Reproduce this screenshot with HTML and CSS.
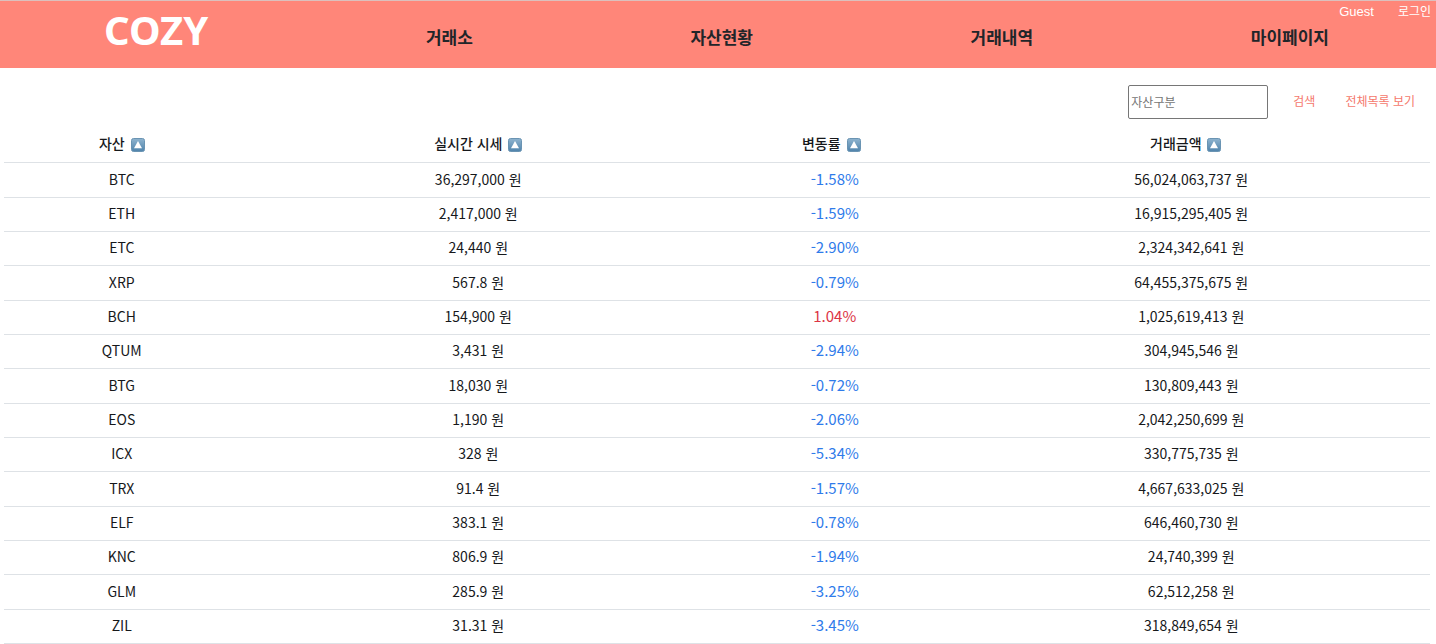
FILE: index.html
```html
<!DOCTYPE html>
<html lang="ko">
<head>
<meta charset="utf-8">
<meta name="viewport" content="width=device-width, initial-scale=1">
<title>COZY</title>
<link rel="stylesheet" href="styles.css">
</head>
<body>
<svg class="defs" aria-hidden="true">
  <defs>
    <linearGradient id="key" x1="0" y1="0" x2="0" y2="1">
      <stop offset="0" stop-color="#8fb4cf"/>
      <stop offset="1" stop-color="#4f83ab"/>
    </linearGradient>
    <symbol id="up" viewBox="0 0 14 14">
      <rect x="0.5" y="0.5" width="13" height="13" rx="2" fill="url(#key)" stroke="#6a94b3"/>
      <path d="M7 3 L11 10.2 H3 Z" fill="#fff"/>
    </symbol>
  </defs>
</svg>
<header class="header">
  <nav class="menu">
    <a class="logo" href="#">COZY</a>
    <a class="menu-link" href="#">거래소</a>
    <a class="menu-link" href="#">자산현황</a>
    <a class="menu-link" href="#">거래내역</a>
    <a class="menu-link" href="#">마이페이지</a>
  </nav>
  <div class="account"><span>Guest</span><a href="#">로그인</a></div>
</header>
<main class="main">
  <form class="search">
    <input class="search-input" type="text" placeholder="자산구분" aria-label="자산구분">
    <button class="text-button" type="button">검색</button>
    <button class="text-button" type="button">전체목록 보기</button>
  </form>
  <table class="prices">
    <thead>
      <tr>
        <th>자산 <button class="sort" type="button" aria-label="자산 정렬"><svg><use href="#up"/></svg></button></th>
        <th>실시간 시세 <button class="sort" type="button" aria-label="실시간 시세 정렬"><svg><use href="#up"/></svg></button></th>
        <th>변동률 <button class="sort" type="button" aria-label="변동률 정렬"><svg><use href="#up"/></svg></button></th>
        <th>거래금액 <button class="sort" type="button" aria-label="거래금액 정렬"><svg><use href="#up"/></svg></button></th>
      </tr>
    </thead>
    <tbody>
      <tr><td>BTC</td><td>36,297,000 원</td><td class="change down">-1.58%</td><td>56,024,063,737 원</td></tr>
      <tr><td>ETH</td><td>2,417,000 원</td><td class="change down">-1.59%</td><td>16,915,295,405 원</td></tr>
      <tr><td>ETC</td><td>24,440 원</td><td class="change down">-2.90%</td><td>2,324,342,641 원</td></tr>
      <tr><td>XRP</td><td>567.8 원</td><td class="change down">-0.79%</td><td>64,455,375,675 원</td></tr>
      <tr><td>BCH</td><td>154,900 원</td><td class="change rise">1.04%</td><td>1,025,619,413 원</td></tr>
      <tr><td>QTUM</td><td>3,431 원</td><td class="change down">-2.94%</td><td>304,945,546 원</td></tr>
      <tr><td>BTG</td><td>18,030 원</td><td class="change down">-0.72%</td><td>130,809,443 원</td></tr>
      <tr><td>EOS</td><td>1,190 원</td><td class="change down">-2.06%</td><td>2,042,250,699 원</td></tr>
      <tr><td>ICX</td><td>328 원</td><td class="change down">-5.34%</td><td>330,775,735 원</td></tr>
      <tr><td>TRX</td><td>91.4 원</td><td class="change down">-1.57%</td><td>4,667,633,025 원</td></tr>
      <tr><td>ELF</td><td>383.1 원</td><td class="change down">-0.78%</td><td>646,460,730 원</td></tr>
      <tr><td>KNC</td><td>806.9 원</td><td class="change down">-1.94%</td><td>24,740,399 원</td></tr>
      <tr><td>GLM</td><td>285.9 원</td><td class="change down">-3.25%</td><td>62,512,258 원</td></tr>
      <tr><td>ZIL</td><td>31.31 원</td><td class="change down">-3.45%</td><td>318,849,654 원</td></tr>
    </tbody>
  </table>
</main>
</body>
</html>
```
FILE: styles.css
```css
* { box-sizing: border-box; }

body {
  margin: 0;
  background: #fff;
  color: #212529;
  font-family: "Noto Sans CJK KR", sans-serif;
  font-size: 14px;
}

a { color: inherit; text-decoration: none; }

button {
  padding: 0;
  border: 0;
  background: none;
  font: inherit;
  color: inherit;
}

.defs { position: absolute; width: 0; height: 0; }

.header {
  position: relative;
  background: #ff8679;
  border-top: 1px solid #dcc0bd;
}

.menu {
  display: flex;
  justify-content: space-between;
  padding: 0 107px 7px 104px;
}

.logo {
  color: #fff;
  font: bold 40px/58px "Noto Sans", sans-serif;
}

.menu-link {
  padding-top: 12px;
  font-size: 17px;
  font-weight: bold;
  line-height: 48px;
}

.account {
  position: absolute;
  top: 0;
  right: 5px;
  display: flex;
  gap: 24px;
  color: #fff;
  font: 13px/22px "Liberation Sans", "Noto Sans CJK KR", sans-serif;
}

.account a { font-size: 12px; }

.main { padding: 17px 6px 0 4px; }

.search {
  display: flex;
  justify-content: flex-end;
  padding-right: 15px;
  margin-bottom: 8px;
}

.search-input {
  width: 140px;
  height: 34px;
  margin-right: 25px;
  padding: 0 2px 2px;
  border: 1px solid #767676;
  border-radius: 2px;
  font: 12px "Noto Sans CJK KR", sans-serif;
}

.search-input::placeholder { color: #757575; }

.text-button {
  color: #f5786c;
  font-size: 12px;
  line-height: 32px;
  align-self: flex-start;
}

.text-button + .text-button { margin-left: 30px; }

.prices {
  width: 100%;
  table-layout: fixed;
  border-collapse: separate;
  border-spacing: 0;
  text-align: center;
}

.prices th,
.prices td {
  height: 34px;
  padding: 0 121px 3px 0;
  border-bottom: 1px solid #dee2e6;
  color: #16181b;
  line-height: 28px;
  white-space: nowrap;
}

.prices tbody tr:nth-child(3n + 1) td { height: 35px; }

.prices th { height: 36px; font-weight: 500; }
.prices th:nth-child(3) { padding-right: 128px; }
.prices th:nth-child(4) { padding-right: 132px; }

.sort { margin-left: 2px; vertical-align: -3px; line-height: 14px; }
.sort svg { display: block; width: 14px; height: 14px; }

.prices .change { font-size: 15px; }
.prices .down { color: #2f7bea; }
.prices .rise { color: #dc3545; }
```
